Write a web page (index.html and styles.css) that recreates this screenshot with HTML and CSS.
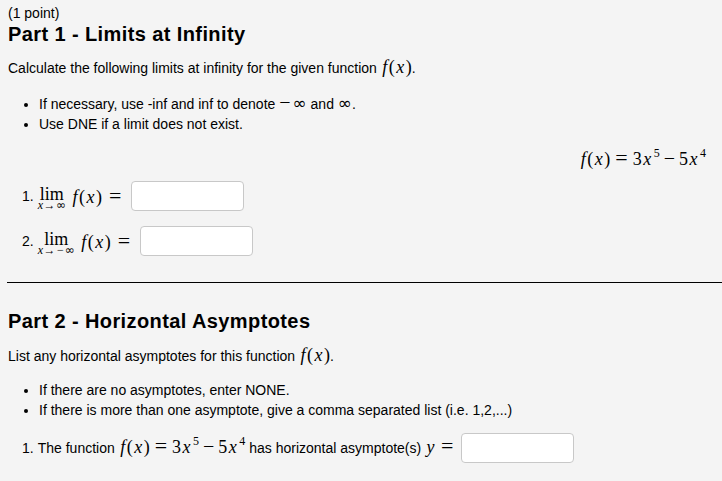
FILE: index.html
```html
<!DOCTYPE html>
<html>
<head>
<meta charset="utf-8">
<link rel="stylesheet" href="styles.css">
</head>
<body>
<div class="problem">
  <div class="points">(1 point)</div>
  <h2 class="part-title">Part 1 - Limits at Infinity</h2>
  <p class="para">Calculate the following limits at infinity for the given function <span class="m"><i>f</i>(<i>x</i>)</span>.</p>
  <ul class="bullets">
    <li>If necessary, use -inf and inf to denote <span class="m"><span class="minus">−</span><span class="inf">∞</span></span> and <span class="m"><span class="inf">∞</span></span>.</li>
    <li>Use DNE if a limit does not exist.</li>
  </ul>
  <div class="fx"><span class="m"><i>f</i>(<i>x</i>)<span class="op op-eq">=</span>3<i>x</i><sup>5</sup><span class="op op-bin">−</span>5<i>x</i><sup>4</sup></span></div>
  <ol class="limits">
    <li class="row">
      <span class="num">1.</span>
      <span class="lim"><span class="lim-word">lim</span><span class="lim-sub"><i>x</i><span class="arr">→</span><span class="inf-s">∞</span></span></span>
      <span class="m row-m"><i>f</i>(<i>x</i>)<span class="op op-eq row-eq">=</span></span>
      <span class="answer"></span>
    </li>
    <li class="row row2">
      <span class="num">2.</span>
      <span class="lim"><span class="lim-word">lim</span><span class="lim-sub"><i>x</i><span class="arr">→</span><span class="neg">−</span><span class="inf-s">∞</span></span></span>
      <span class="m row-m"><i>f</i>(<i>x</i>)<span class="op op-eq row-eq">=</span></span>
      <span class="answer"></span>
    </li>
  </ol>
  <hr class="rule">
  <h2 class="part-title part2">Part 2 - Horizontal Asymptotes</h2>
  <p class="para para2">List any horizontal asymptotes for this function <span class="m"><i>f</i>(<i>x</i>)</span>.</p>
  <ul class="bullets">
    <li>If there are no asymptotes, enter NONE.</li>
    <li>If there is more than one asymptote, give a comma separated list (i.e. 1,2,...)</li>
  </ul>
  <div class="row asym">
    <span class="num">1.</span>
    <span class="asym-text">The function <span class="m"><i>f</i>(<i>x</i>)<span class="op op-eq">=</span>3<i>x</i><sup>5</sup><span class="op op-bin">−</span>5<i>x</i><sup>4</sup></span> has horizontal asymptote(s) <span class="m"><i>y</i><span class="op op-eq">=</span></span></span>
    <span class="answer answer-asym"></span>
  </div>
</div>
</body>
</html>
```

FILE: styles.css
```css
html, body {
  margin: 0;
  padding: 0;
  background: #f4f4f4;
}
body {
  font-family: "Liberation Sans", Arial, sans-serif;
  font-size: 14px;
  color: #000;
}
.problem {
  padding: 5px 8px 0 8px;
}
.points {
  line-height: 16px;
}
.part-title {
  font-size: 20px;
  letter-spacing: 0.4px;
  font-weight: bold;
  margin: 1px 0 0 0;
  line-height: 24px;
}
.para {
  margin: 12px 0 0 0;
  line-height: 20px;
}
.m {
  font-family: "Liberation Serif", serif;
  font-size: 18px;
  line-height: 1;
  white-space: nowrap;
}
.m i {
  padding: 0 1.5px;
}
.m sup {
  font-size: 12px;
  vertical-align: 8px;
  line-height: 0;
  margin-left: 1px;
}
.op {
  font-size: 20px;
}
.op-eq {
  font-size: 22px;
  margin: 0 5px;
}
.op-bin {
  margin: 0 4px;
}
.minus {
  font-size: 20px;
  margin-right: 2px;
}
.inf {
  font-family: "DejaVu Sans", sans-serif;
  font-size: 17px;
}
.bullets {
  margin: 14px 0 0 0;
  padding-left: 31px;
  line-height: 20px;
}
.fx {
  text-align: right;
  padding-right: 8px;
  margin-top: 13px;
  line-height: 24px;
}
.limits {
  list-style: none;
  margin: 9px 0 0 0;
  padding: 0;
}
.row {
  display: flex;
  align-items: flex-start;
  height: 30px;
  padding-left: 14px;
}
.row2 {
  margin-top: 15px;
}
.num {
  line-height: 30px;
  margin-right: 4px;
}
.lim {
  display: flex;
  flex-direction: column;
  align-items: center;
  margin-right: 5px;
}
.lim-word {
  font-family: "Liberation Serif", serif;
  font-size: 18px;
  line-height: 18px;
  margin-top: 4px;
}
.lim-sub {
  font-family: "Liberation Serif", serif;
  font-size: 12px;
  line-height: 10px;
  margin-top: -3px;
  white-space: nowrap;
}
.arr {
  font-size: 12px;
  margin: 0 0.5px;
}
.neg {
  margin: 0 1px;
}
.inf-s {
  font-family: "DejaVu Sans", sans-serif;
  font-size: 12px;
}
.row-m {
  line-height: 30px;
}
.row-eq {
  margin: 0 7px;
}
.asym-text {
  line-height: 30px;
}
.answer {
  display: block;
  width: 111px;
  height: 28px;
  background: #fff;
  border: 1px solid #c8c8c8;
  border-radius: 4px;
  margin-left: 3px;
}
.answer-asym {
  margin-left: 2px;
}
.rule {
  border: 0;
  border-top: 1px solid #000;
  height: 0;
  margin: 26px -8px 0 -1px;
}
.part2 {
  margin-top: 26px;
}
.para2 {
  margin-top: 13px;
}
.asym {
  margin-top: 13px;
}
```
